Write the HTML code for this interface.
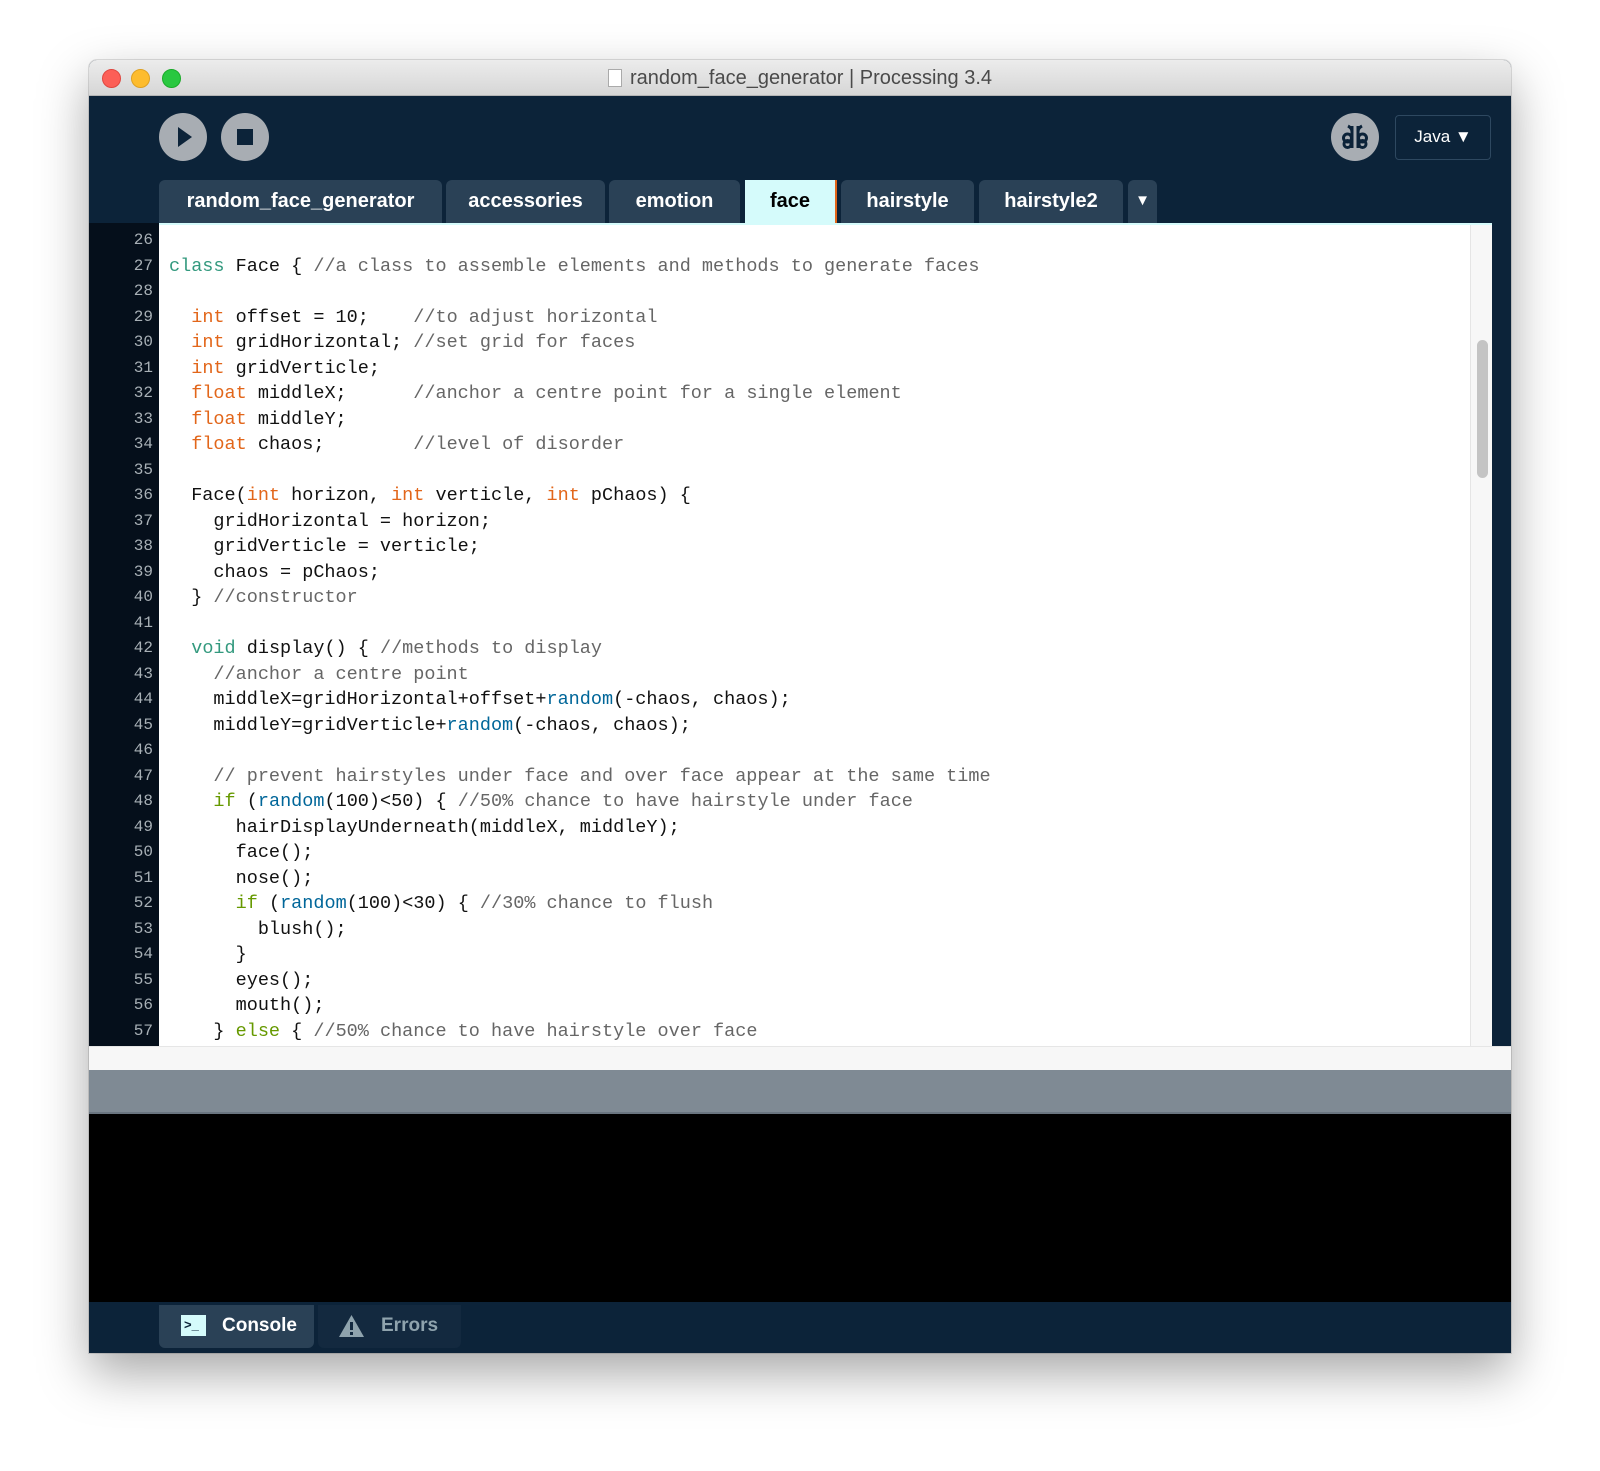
<!DOCTYPE html>
<html><head><meta charset="utf-8"><style>
*{margin:0;padding:0;box-sizing:border-box}
body{width:1600px;height:1471px;background:#fff;position:relative;overflow:hidden;font-family:"Liberation Sans",sans-serif}
.win{position:absolute;left:89px;top:60px;width:1422px;height:1293px;border-radius:8px 8px 0 0;overflow:hidden;box-shadow:0 20px 50px rgba(0,0,0,.35),0 0 0 1px rgba(0,0,0,.12);background:#0c2339}
.title{position:absolute;left:0;top:0;width:100%;height:36px;background:linear-gradient(#ececec,#d6d6d6);border-bottom:1px solid #b5b5b5;text-align:center;font-size:20px;line-height:36px;color:#4a4a4a}
.dot{position:absolute;top:9px;width:19px;height:19px;border-radius:50%}
.tb{position:absolute;top:36px;left:0;width:100%;height:1257px;background:#0c2339}
.cbtn{position:absolute;width:48px;height:48px;border-radius:50%;background:#a8adb3}
.tab{position:absolute;top:84px;height:43px;background:#2a4156;color:#fff;font-weight:bold;font-size:20px;text-align:center;line-height:42px;border-radius:6px 6px 0 0}
.gut{position:absolute;left:0;top:127px;width:70px;height:823px;background:#050f1b;color:#a8b0b6;font-family:"Liberation Mono",monospace;font-size:16px;text-align:right;padding-right:6px;padding-top:5px;line-height:25.5px}
.ed{position:absolute;left:70px;top:127px;width:1333px;height:823px;background:#fff;border-top:2px solid #d5fbfb;overflow:hidden}
pre{font-family:"Liberation Mono",monospace;font-size:18.5px;line-height:25.5px;color:#111;padding:3px 0 0 10px}
.k{color:#e2661a}.t{color:#33997e}.g{color:#669900}.b{color:#006699}.c{color:#666}
</style></head><body>
<div class="win">
<div class="title"><span style="display:inline-block;width:14px;height:18px;border:1px solid #aaa;background:#fff;vertical-align:-3px;margin-right:8px"></span>random_face_generator | Processing 3.4
<div class="dot" style="left:13px;background:#fc5f57;border:1px solid #df4740"></div>
<div class="dot" style="left:42px;background:#fdbc2e;border:1px solid #dea123"></div>
<div class="dot" style="left:73px;background:#29c840;border:1px solid #1aab29"></div>
</div>
<div class="tb">
<div class="cbtn" style="left:70px;top:17px"><svg width="48" height="48"><path d="M19 14 L33 24 L19 34Z" fill="#0c2339"/></svg></div>
<div class="cbtn" style="left:132px;top:17px"><svg width="48" height="48"><rect x="16" y="16" width="16" height="16" fill="#0c2339"/></svg></div>
<div class="cbtn" style="left:1242px;top:17px"><svg width="48" height="48" fill="none" stroke="#0c2339" stroke-width="3"><path d="M21 13 v22 M27 13 v22 M17 13 q4 2 4 6 M31 13 q-4 2 -4 6"/><circle cx="16.5" cy="25" r="4"/><circle cx="16.5" cy="31" r="3.5"/><circle cx="31.5" cy="25" r="4"/><circle cx="31.5" cy="31" r="3.5"/></svg></div>
<div style="position:absolute;left:1306px;top:19px;width:96px;height:45px;border:1.5px solid #2e4860;border-radius:4px;color:#fff;font-size:17px;line-height:42px;text-align:center">Java &#9660;</div>
<div class="tab" style="left:70px;width:283px">random_face_generator</div>
<div class="tab" style="left:357px;width:159px">accessories</div>
<div class="tab" style="left:520px;width:131px">emotion</div>
<div class="tab" style="left:656px;width:92px;background:#d5fbfb;color:#000;border-right:2px solid #e2661a;border-radius:0">face</div>
<div class="tab" style="left:752px;width:133px">hairstyle</div>
<div class="tab" style="left:890px;width:144px">hairstyle2</div>
<div class="tab" style="left:1039px;width:29px;font-size:15px">&#9660;</div>
<div class="gut">26<br>27<br>28<br>29<br>30<br>31<br>32<br>33<br>34<br>35<br>36<br>37<br>38<br>39<br>40<br>41<br>42<br>43<br>44<br>45<br>46<br>47<br>48<br>49<br>50<br>51<br>52<br>53<br>54<br>55<br>56<br>57</div>
<div class="ed">
<div style="position:absolute;right:0;top:0;width:22px;height:100%;background:#f7f7f7;border-left:1px solid #e5e5e5"><div style="position:absolute;left:6px;top:115px;width:11px;height:138px;border-radius:6px;background:#c4c4c4"></div></div>
<pre>

<span class="t">class</span> Face { <span class="c">//a class to assemble elements and methods to generate faces</span>

  <span class="k">int</span> offset = 10;    <span class="c">//to adjust horizontal</span>
  <span class="k">int</span> gridHorizontal; <span class="c">//set grid for faces</span>
  <span class="k">int</span> gridVerticle;
  <span class="k">float</span> middleX;      <span class="c">//anchor a centre point for a single element</span>
  <span class="k">float</span> middleY;
  <span class="k">float</span> chaos;        <span class="c">//level of disorder</span>

  Face(<span class="k">int</span> horizon, <span class="k">int</span> verticle, <span class="k">int</span> pChaos) {
    gridHorizontal = horizon;
    gridVerticle = verticle;
    chaos = pChaos;
  } <span class="c">//constructor</span>

  <span class="t">void</span> display() { <span class="c">//methods to display</span>
    <span class="c">//anchor a centre point</span>
    middleX=gridHorizontal+offset+<span class="b">random</span>(-chaos, chaos);
    middleY=gridVerticle+<span class="b">random</span>(-chaos, chaos);

    <span class="c">// prevent hairstyles under face and over face appear at the same time</span>
    <span class="g">if</span> (<span class="b">random</span>(100)&lt;50) { <span class="c">//50% chance to have hairstyle under face</span>
      hairDisplayUnderneath(middleX, middleY);
      face();
      nose();
      <span class="g">if</span> (<span class="b">random</span>(100)&lt;30) { <span class="c">//30% chance to flush</span>
        blush();
      }
      eyes();
      mouth();
    } <span class="g">else</span> { <span class="c">//50% chance to have hairstyle over face</span></pre>
</div>
<div style="position:absolute;left:0;top:950px;width:100%;height:24px;background:#f7f7f7;border-top:1px solid #e6e6e6"></div>
<div style="position:absolute;left:0;top:974px;width:100%;height:44px;background:#7f8a94;border-bottom:2px solid #6a7580"></div>
<div style="position:absolute;left:0;top:1018px;width:100%;height:188px;background:#000"></div>
<div style="position:absolute;left:70px;top:1209px;width:155px;height:43px;background:#2a4156;border-radius:0 0 6px 6px;color:#fff;font-size:19px;font-weight:bold;line-height:42px"><span style="position:absolute;left:22px;top:10px;width:25px;height:21px;background:#d5fbfb;color:#0c2339;font-size:13px;line-height:19px;padding-left:3px">&gt;_</span><span style="position:absolute;left:63px">Console</span></div>
<div style="position:absolute;left:229px;top:1209px;width:143px;height:43px;background:#13293f;border-radius:0 0 6px 6px;color:#8fa3ad;font-size:19px;font-weight:bold;line-height:42px"><svg style="position:absolute;left:20px;top:9px" width="27" height="24"><path d="M13.5 1 L26 23 H1Z" fill="#8fa3ad"/><rect x="12" y="8" width="3" height="8" fill="#13293f"/><rect x="12" y="18" width="3" height="3" fill="#13293f"/></svg><span style="position:absolute;left:63px">Errors</span></div>
</div>
</div>
</body></html>
